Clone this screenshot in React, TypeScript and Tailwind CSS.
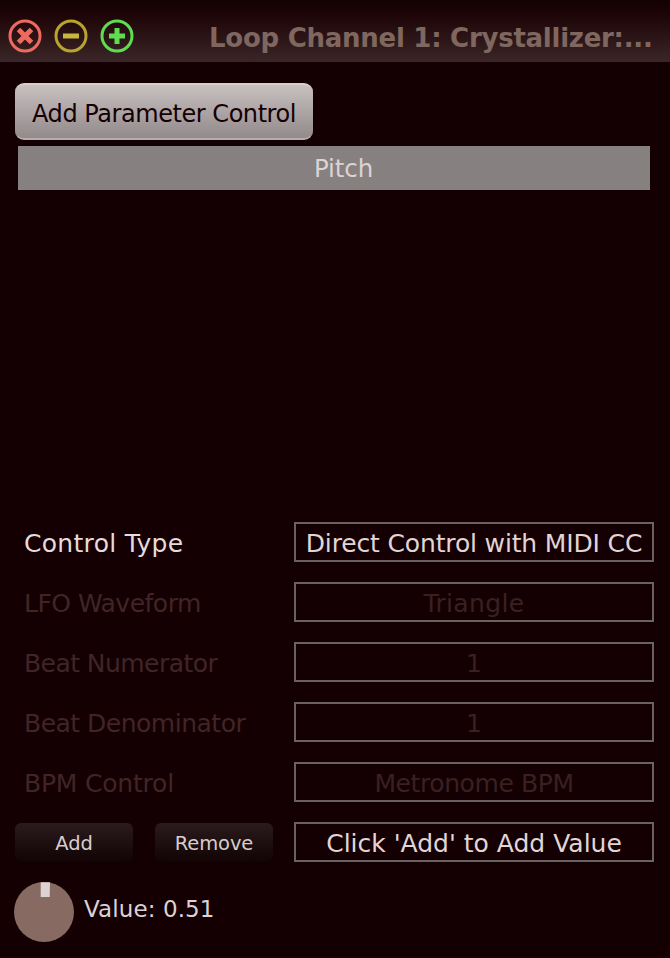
import React from "react";

const font = "font-['DejaVu_Sans',sans-serif]";

function Row({ label, labelClass, value, valueClass, on = false }: { label: string; labelClass: string; value: string; valueClass: string; on?: boolean }) {
  return (
    <div className="flex h-10 items-center">
      <div className={`w-[270px] pt-[3px] pl-[9px] text-[25px] ${labelClass} ${on ? "text-[#e4dcdc]" : "text-[#412526]"}`}>{label}</div>
      <Box value={value} valueClass={valueClass} on={on} />
    </div>
  );
}

function Box({ value, valueClass, on = false }: { value: string; valueClass: string; on?: boolean }) {
  return (
    <div className={`ml-[9px] flex h-10 w-[360px] items-center justify-center border-2 border-[#6a6261] pt-[4px] text-[25px] whitespace-nowrap ${valueClass} ${on ? "text-[#e0d6d6]" : "text-[#3a2021]"}`}>
      {value}
    </div>
  );
}

function SmallButton({ label, className }: { label: string; className: string }) {
  return (
    <div className={`flex h-[38px] w-[118px] items-center justify-center rounded-[6px] bg-gradient-to-b from-[#2b1b1c] to-[#120506] pt-[3px] text-[19.5px] tracking-[-0.1px] text-[#d8cccc] ${className}`}>
      {label}
    </div>
  );
}

export default function App() {
  return (
    <div className={`h-[958px] w-[670px] overflow-hidden bg-[#140002] ${font}`}>
      <div className="flex h-[62px] items-center bg-gradient-to-b from-[#140002] to-[#3a2628] pt-[13px]">
        <svg width="140" height="62" viewBox="0 0 140 62" className="mt-[-13px] shrink-0">
          <circle cx="25" cy="36" r="15" fill="none" stroke="#ee6a5e" strokeWidth="3" />
          <path d="M18.5 29.5 L31.5 42.5 M31.5 29.5 L18.5 42.5" stroke="#ee6a5e" strokeWidth="5" />
          <circle cx="71" cy="36" r="15" fill="none" stroke="#b8a42f" strokeWidth="3" />
          <path d="M63 36 H79" stroke="#c9b63f" strokeWidth="5" />
          <circle cx="117" cy="36" r="15" fill="none" stroke="#5fdc50" strokeWidth="3" />
          <path d="M109 36 H125 M117 28 V44" stroke="#5fdc50" strokeWidth="5" />
        </svg>
        <div className="ml-[69px] text-[26px] leading-none font-bold tracking-[-0.26px] whitespace-nowrap text-[#7f6760]">
          Loop Channel 1: Crystallizer:...
        </div>
      </div>

      <div className="mt-[21px] ml-[15px] flex h-[57px] w-[298px] items-center justify-center rounded-[9px] border-t-2 border-b-2 border-t-[#d8d0d0] border-b-[#b5adad] bg-gradient-to-b from-[#c9c0c0] to-[#928a8b] pt-[4px] text-[24px] tracking-[-0.45px] text-[#140002]">
        Add Parameter Control
      </div>

      <div className="mt-[6px] ml-[18px] flex h-[44px] w-[632px] items-center justify-center bg-[#878081] pt-[2px] pl-[19px] text-[24.5px] tracking-[-0.1px] text-[#dcd3d3]">
        Pitch
      </div>

      <div className="mt-[332px] flex flex-col gap-5 pl-[15px]">
        <Row label="Control Type" labelClass="tracking-[0.3px]" value="Direct Control with MIDI CC" valueClass="tracking-[-0.15px]" on />
        <Row label="LFO Waveform" labelClass="tracking-[-0.5px]" value="Triangle" valueClass="tracking-[0.35px]" />
        <Row label="Beat Numerator" labelClass="tracking-[-0.55px]" value="1" valueClass="" />
        <Row label="Beat Denominator" labelClass="tracking-[-0.5px]" value="1" valueClass="" />
        <Row label="BPM Control" labelClass="tracking-[-0.2px]" value="Metronome BPM" valueClass="tracking-[-0.4px]" />
        <div className="flex h-10 items-center">
          <SmallButton label="Add" className="" />
          <SmallButton label="Remove" className="ml-[22px]" />
          <div className="ml-[12px]">
            <Box value="Click 'Add' to Add Value" valueClass="" on />
          </div>
        </div>
      </div>

      <div className="mt-5 ml-[14px] flex items-center">
        <svg width="60" height="60" viewBox="0 0 60 60" className="shrink-0">
          <circle cx="30" cy="30" r="30" fill="#876a62" />
          <path d="M26.7 0.3 H36 L35.7 15 H26.7 Z" fill="#ddd3d3" />
        </svg>
        <div className="ml-[10px] pb-[5px] text-[23px] tracking-[0.1px] text-[#dcd2d2]">Value: 0.51</div>
      </div>
    </div>
  );
}
